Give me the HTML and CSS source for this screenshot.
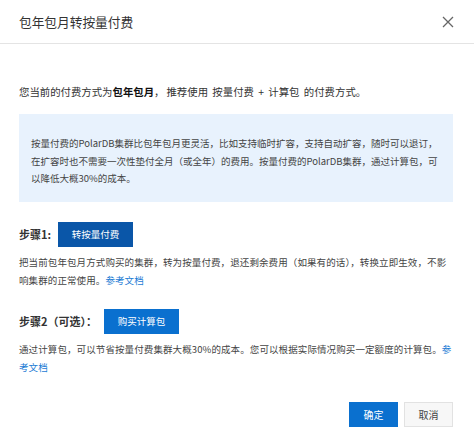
FILE: index.html
```html
<!DOCTYPE html>
<html lang="zh-CN">
<head>
<meta charset="utf-8">
<title>包年包月转按量付费</title>
<link rel="stylesheet" href="styles.css">
</head>
<body>
<div class="dialog">
  <div class="header">
    <div class="title">包年包月转按量付费</div>
    <svg class="close" width="12" height="12" viewBox="0 0 12 12"><path d="M1 1 L11 11 M11 1 L1 11" stroke="#666" stroke-width="1.3" fill="none"/></svg>
  </div>
  <div class="content">
    <p class="intro">您当前的付费方式为<b>包年包月</b><span class="comma">，</span>推荐使用 按量付费 + 计算包 的付费方式。</p>
    <div class="infobox">按量付费的PolarDB集群比包年包月更灵活，比如支持临时扩容，支持自动扩容，随时可以退订，在扩容时也不需要一次性垫付全月（或全年）的费用。按量付费的PolarDB集群，通过计算包，可以降低大概30%的成本。</div>
    <div class="step">
      <span class="step-label">步骤1:</span>
      <button class="btn btn-dark">转按量付费</button>
    </div>
    <p class="desc">把当前包年包月方式购买的集群，转为按量付费，退还剩余费用（如果有的话），转换立即生效，不影响集群的正常使用。<a class="link">参考文档</a></p>
    <div class="step">
      <span class="step-label">步骤2（可选）：</span>
      <button class="btn btn-blue">购买计算包</button>
    </div>
    <p class="desc">通过计算包，可以节省按量付费集群大概30%的成本。您可以根据实际情况购买一定额度的计算包。<a class="link">参考文档</a></p>
  </div>
  <div class="footer">
    <button class="btn btn-blue btn-small">确定</button>
    <button class="btn btn-plain btn-small">取消</button>
  </div>
</div>
</body>
</html>
```
FILE: styles.css
```css
html, body {
  margin: 0;
  padding: 0;
  background: #fff;
}
body {
  font-family: "Noto Sans CJK SC", "Noto Sans", sans-serif;
  color: #333;
}
.dialog {
  width: 474px;
  height: 441px;
  box-sizing: border-box;
}
.header {
  height: 44px;
  box-sizing: border-box;
  border-bottom: 1px solid #e4e4e4;
  display: flex;
  align-items: center;
  justify-content: space-between;
  padding: 0 20px 0 19px;
}
.title {
  font-size: 12.7px;
  color: #333;
}
.close {
  display: block;
}
.content {
  padding: 0 21px 0 19px;
}
.intro {
  margin: 39px 0 0;
  font-size: 10.4px;
  line-height: 18px;
  word-spacing: 2px;
  white-space: nowrap;
}
.intro b {
  font-weight: 700;
  color: #111;
}
.intro .comma {
  margin-right: 2px;
}
.infobox {
  margin-top: 13px;
  background: #e8f2fd;
  padding: 21px 12px 14px;
  font-size: 9.5px;
  line-height: 17.5px;
  color: #444;
}
.step {
  margin-top: 20px;
  display: flex;
  align-items: center;
  height: 25px;
}
.step-label {
  font-size: 11px;
  font-weight: 700;
  color: #333;
  margin-right: 7px;
}
.btn {
  font-family: inherit;
  border: none;
  height: 25px;
  padding: 0;
  font-size: 9.5px;
  color: #fff;
  white-space: nowrap;
  cursor: pointer;
}
.btn-dark {
  background: #0a56a8;
  width: 75px;
}
.btn-blue {
  background: #0a70cf;
  width: 75px;
}
.desc {
  margin: 6px 0 0;
  font-size: 9.5px;
  line-height: 18px;
  letter-spacing: 0.1px;
  color: #444;
}
.link {
  color: #1a7bd4;
  text-decoration: none;
}
.footer {
  margin-top: 26px;
  display: flex;
  justify-content: flex-end;
  gap: 6px;
  padding-right: 21px;
}
.btn-small {
  width: 49px;
  font-size: 10px;
}
.btn-plain {
  background: #f7f7f7;
  border: 1px solid #e2e2e2;
  color: #444;
}
```
